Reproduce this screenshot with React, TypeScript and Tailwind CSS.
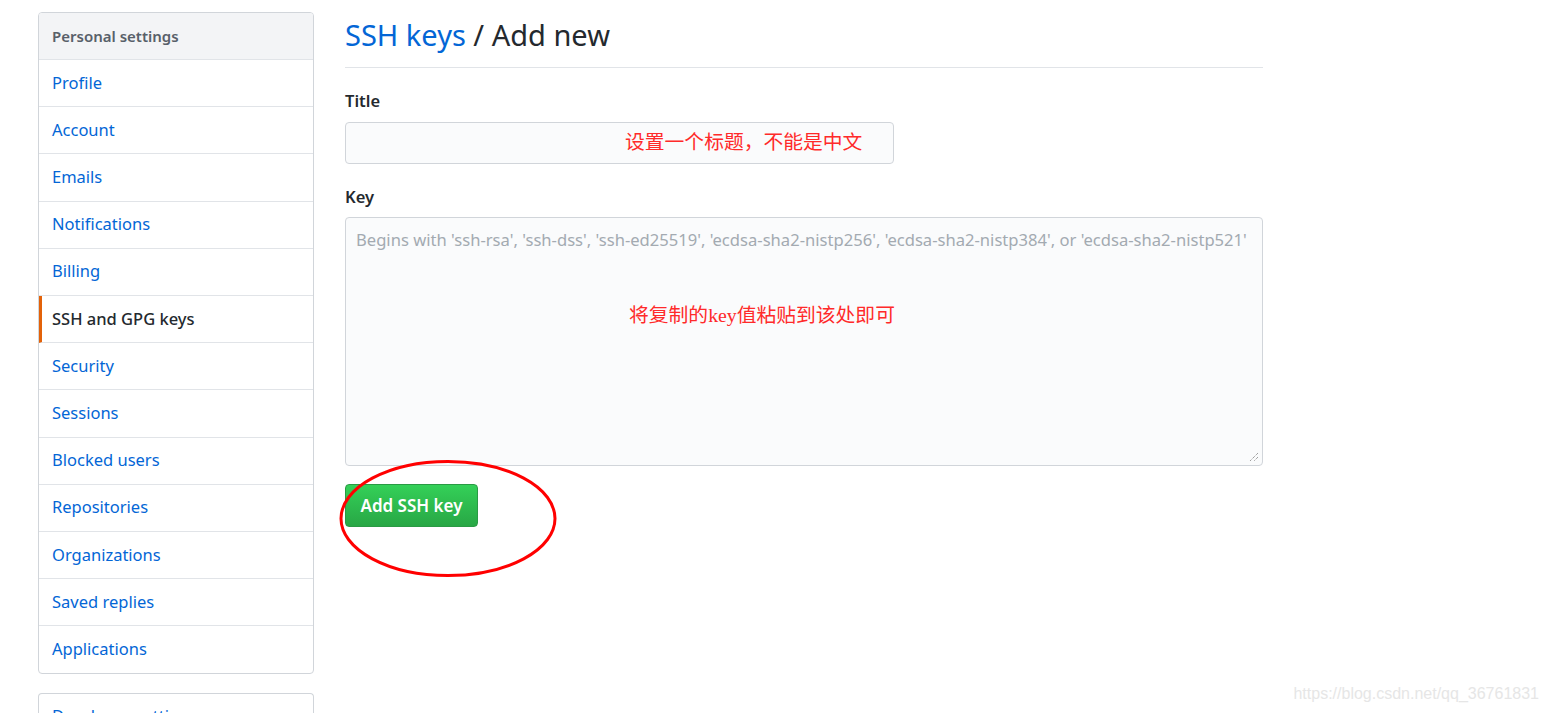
const items = [
  "Profile",
  "Account",
  "Emails",
  "Notifications",
  "Billing",
  "SSH and GPG keys",
  "Security",
  "Sessions",
  "Blocked users",
  "Repositories",
  "Organizations",
  "Saved replies",
  "Applications",
];

const font = { fontFamily: '"Noto Sans", "Open Sans", sans-serif' };
const cjk = { fontFamily: '"Liberation Serif", "Noto Sans CJK SC", serif' };

function Sidebar() {
  return (
    <aside className="w-[276px] shrink-0">
      <nav className="overflow-hidden rounded-[4px] border border-[#d1d5da]">
        <div className="flex h-[47px] items-center border-b border-[#e1e4e8] bg-[#f3f4f6] px-[13px] text-[15px] font-semibold text-[#586069]">
          Personal settings
        </div>
        {items.map((item, i) => {
          const active = item === "SSH and GPG keys";
          return (
            <div
              key={item}
              className={
                "flex h-[47.2px] items-center px-[13px] text-[16.5px] " +
                (i < items.length - 1 ? "border-b border-[#e1e4e8] " : "") +
                (active
                  ? "border-l-[3px] border-l-[#e36209] pl-[10px] font-medium text-[#24292e]"
                  : "text-[#0366d6]")
              }
            >
              {item}
            </div>
          );
        })}
      </nav>
      <div className="mt-[19px] h-[40px] rounded-t-[4px] border border-b-0 border-[#d1d5da] px-[13px] pt-[10px] text-[16.5px] text-[#0366d6]">
        Developer settings
      </div>
    </aside>
  );
}

export default function App() {
  return (
    <div className="relative h-[713px] overflow-hidden bg-white text-[#24292e]" style={font}>
      <div className="flex gap-[31px] pl-[38px] pt-[12px]">
        <Sidebar />
        <main className="w-[918px]">
          <h1 className="border-b border-[#e1e4e8] pb-[9px] text-[29px] leading-[46px]">
            <span className="text-[#0366d6]">SSH keys</span> / Add new
          </h1>
          <label className="mt-[21px] block text-[16.5px] font-semibold leading-[24px]">Title</label>
          <div className="mt-[9px] flex h-[42px] w-[549px] items-center rounded-[4px] border border-[#d1d5da] bg-[#fafbfc] pl-[279px] text-[19.8px] text-[#ff2a2a]" style={cjk}>
            设置一个标题，不能是中文
          </div>
          <label className="mt-[21px] block text-[16.5px] font-semibold leading-[24px]">Key</label>
          <div className="relative mt-[8px] h-[249px] rounded-[4px] border border-[#d1d5da] bg-[#fafbfc] px-[10px] pt-[10px]">
            <div className="whitespace-nowrap text-[16.6px] leading-[24px] text-[#a3aab1]">
              Begins with 'ssh-rsa', 'ssh-dss', 'ssh-ed25519', 'ecdsa-sha2-nistp256', 'ecdsa-sha2-nistp384', or 'ecdsa-sha2-nistp521'
            </div>
            <div className="mt-[49px] pl-[273px] text-[19.8px] text-[#ff2a2a]" style={cjk}>
              将复制的key值粘贴到该处即可
            </div>
            <svg className="absolute bottom-[3px] right-[3px]" width="10" height="10" viewBox="0 0 10 10">
              <path d="M9 1 L1 9 M9 5 L5 9" stroke="#777" strokeWidth="1" strokeDasharray="1 1" />
            </svg>
          </div>
          <button className="mt-[18px] h-[43px] w-[133px] rounded-[4px] border border-[#2a9a44] bg-gradient-to-b from-[#34d058] to-[#28a745] text-[17px] font-semibold text-white">
            Add SSH key
          </button>
        </main>
      </div>
      <svg className="pointer-events-none absolute left-[338px] top-[459px]" width="220" height="120" viewBox="0 0 220 120">
        <ellipse cx="110" cy="59.5" rx="107" ry="57" fill="none" stroke="#f00" strokeWidth="3" />
      </svg>
      <div className="absolute right-[8px] top-[682px] text-[16px] text-[#e6e6e6]" style={{ fontFamily: '"Liberation Sans", sans-serif' }}>
        https://blog.csdn.net/qq_36761831
      </div>
    </div>
  );
}
